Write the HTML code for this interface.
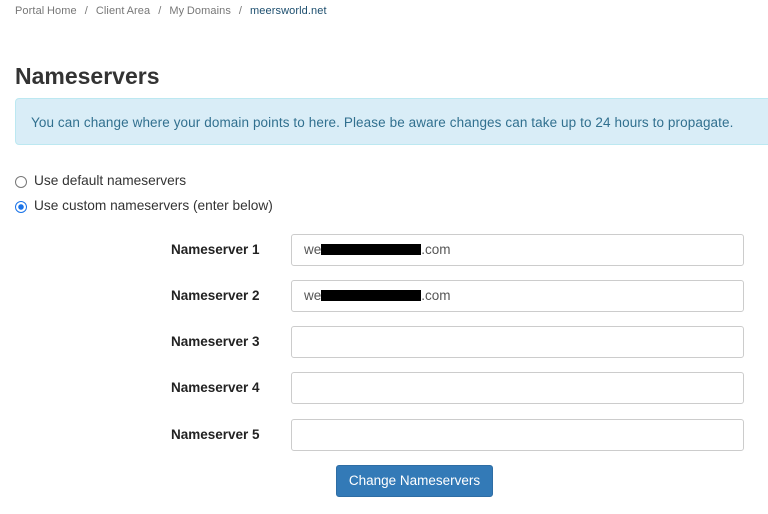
<!DOCTYPE html>
<html><head><style>
body{margin:0;width:768px;height:514px;background:#fff;font-family:"Liberation Sans",sans-serif;color:#333;position:relative;overflow:hidden}
.a{position:absolute;white-space:nowrap}
.bc{top:5px;left:15px;font-size:11px;color:#777;letter-spacing:0.1px;word-spacing:-0.5px}
.bc b{font-weight:normal;color:#1c4e6e}
h1{position:absolute;top:63px;left:15px;margin:0;font-size:23px;font-weight:bold;color:#333}
.alert{position:absolute;top:98px;left:15px;width:760px;height:47px;background:#d9edf7;border:1px solid #bce8f1;border-radius:4px;box-sizing:border-box;color:#31708f;font-size:13.5px;letter-spacing:0.1px;line-height:47px;padding-left:15px}
.rad{position:absolute;left:15px;width:12px;height:12px;border:1px solid #777;border-radius:50%;box-sizing:border-box}
.lab{left:171px;font-size:13.5px;font-weight:bold;color:#222}
.in{position:absolute;left:291px;width:453px;height:32px;border:1px solid #ccc;border-radius:3px;box-sizing:border-box;font-size:13.5px;color:#555;line-height:30px;padding-left:12px}
.red{display:inline-block;width:100px;height:11px;background:#000;vertical-align:-1px}
.btn{position:absolute;left:336px;top:465px;width:157px;height:32px;background:#337ab7;border:1px solid #2e6da4;border-radius:3px;box-sizing:border-box;color:#fff;font-size:13.5px;line-height:30px;text-align:center}
.t{font-size:13.7px}
</style></head><body>
<div class="a bc">Portal Home &nbsp; / &nbsp; Client Area &nbsp; / &nbsp; My Domains &nbsp; / &nbsp; <b>meersworld.net</b></div>
<h1>Nameservers</h1>
<div class="alert">You can change where your domain points to here. Please be aware changes can take up to 24 hours to propagate.</div>
<div class="rad" style="top:176px"></div><div class="a t" style="left:34px;top:173px">Use default nameservers</div>
<div class="rad" style="top:201px;border-color:#1a73e8;background:radial-gradient(circle,#1a73e8 2.5px,#fff 3px)"></div><div class="a t" style="left:34px;top:198px">Use custom nameservers (enter below)</div>
<div class="a lab" style="top:242px">Nameserver 1</div><div class="in" style="top:234px">we<span class="red"></span>.com</div>
<div class="a lab" style="top:288px">Nameserver 2</div><div class="in" style="top:280px">we<span class="red"></span>.com</div>
<div class="a lab" style="top:334px">Nameserver 3</div><div class="in" style="top:326px"></div>
<div class="a lab" style="top:380px">Nameserver 4</div><div class="in" style="top:372px"></div>
<div class="a lab" style="top:427px">Nameserver 5</div><div class="in" style="top:419px"></div>
<div class="btn">Change Nameservers</div>
</body></html>
